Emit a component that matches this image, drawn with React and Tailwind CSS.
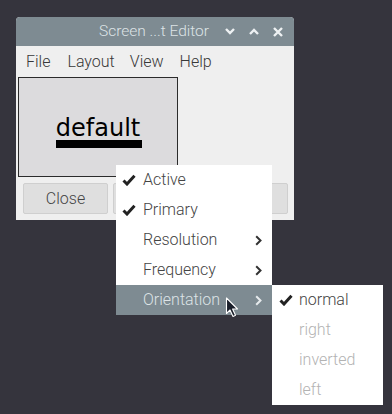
import React from "react";

const Check = ({ className = "" }) => (
  <svg width="14" height="12" viewBox="0 0 14 12" className={className}>
    <path d="M1.5 6.5 L5 10 L12.5 1.8" fill="none" stroke="#222" strokeWidth="3" strokeLinejoin="miter" />
  </svg>
);

const Chev = ({ color = "#333" }) => (
  <svg width="7" height="11" viewBox="0 0 7 11">
    <path d="M1.2 1.2 L5.5 5.5 L1.2 9.8" fill="none" stroke={color} strokeWidth="2" />
  </svg>
);

function MenuItem({ label, checked, sub, active }) {
  return (
    <div className={`flex h-[30px] items-center ${active ? "bg-[#7e8b92] text-[#dde3e6]" : "text-[#444]"}`}>
      <div className="flex w-[27px] justify-start pl-[6px]">{checked && <Check />}</div>
      <span className="flex-1">{label}</span>
      {sub && (
        <div className="mr-[10px]">
          <Chev color={active ? "#e6eaec" : "#333"} />
        </div>
      )}
    </div>
  );
}

export default function App() {
  return (
    <div
      className="relative h-[414px] w-[392px] overflow-hidden bg-[#35343d] font-light"
      style={{ fontFamily: "Roboto, 'Liberation Sans', sans-serif" }}
    >
      {/* Window */}
      <div className="absolute left-[16px] top-[17px] flex h-[203px] w-[278px] flex-col overflow-hidden rounded-t-[4px] bg-[#efefef]">
        <div className="flex h-[29px] items-center bg-[#7e8b92] pl-[83px] text-[15.5px] text-[#dde3e6]">
          <span className="w-[126px] whitespace-nowrap">Screen ...t Editor</span>
          <div className="flex items-center gap-[14px]">
            <svg width="10" height="7" viewBox="0 0 10 7">
              <path d="M1 1 L5 5 L9 1" fill="none" stroke="#eef1f3" strokeWidth="2.4" />
            </svg>
            <svg width="10" height="7" viewBox="0 0 10 7">
              <path d="M1 6 L5 2 L9 6" fill="none" stroke="#eef1f3" strokeWidth="2.4" />
            </svg>
            <svg width="10" height="10" viewBox="0 0 10 10">
              <path d="M1 1 L9 9 M9 1 L1 9" fill="none" stroke="#eef1f3" strokeWidth="2.4" />
            </svg>
          </div>
        </div>
        <div className="flex h-[31px] items-center pl-[10px] text-[16px] text-[#383838]">
          <span>File</span>
          <span className="ml-[17px]">Layout</span>
          <span className="ml-[15px]">View</span>
          <span className="ml-[16px]">Help</span>
        </div>
        <div className="ml-[2px] flex h-[100px] w-[160px] flex-col items-center border border-[#2b2b2b] bg-[#dcdbdd] pt-[38px]">
          <span
            className="text-[24px] leading-[24px] font-normal text-black"
            style={{ fontFamily: "'DejaVu Sans', sans-serif" }}
          >
            default
          </span>
          <div className="ml-[1px] h-[8px] w-[86px] bg-black" />
        </div>
        <div className="ml-[7px] mt-[6px] flex gap-[5px]">
          <div className="flex h-[31px] w-[85px] items-center justify-center rounded-[2px] border border-[#cfcfcf] bg-[#dfdfdf] text-[16px] text-[#444]">
            Close
          </div>
          <div className="h-[31px] w-[85px] rounded-[2px] border border-[#cfcfcf] bg-[#dfdfdf]" />
          <div className="h-[31px] w-[85px] rounded-[2px] border border-[#cfcfcf] bg-[#dfdfdf]" />
        </div>
      </div>

      {/* Context menu */}
      <div className="absolute left-[116px] top-[165px] w-[156px] bg-white text-[16px]">
        <MenuItem label="Active" checked />
        <MenuItem label="Primary" checked />
        <MenuItem label="Resolution" sub />
        <MenuItem label="Frequency" sub />
        <MenuItem label="Orientation" sub active />
      </div>

      {/* Submenu */}
      <div className="absolute left-[272px] top-[285px] w-[111px] bg-white text-[16px]">
        <div className="flex h-[30px] items-center text-[#444]">
          <div className="flex w-[21px] justify-end"><Check /></div>
          <span className="ml-[6px]">normal</span>
        </div>
        <div className="flex h-[30px] items-center pl-[27px] text-[#b3b3b3]">right</div>
        <div className="flex h-[30px] items-center pl-[27px] text-[#b3b3b3]">inverted</div>
        <div className="flex h-[30px] items-center pl-[27px] text-[#b3b3b3]">left</div>
      </div>

      {/* Cursor */}
      <svg className="absolute left-[225px] top-[297px]" width="14" height="21" viewBox="0 0 14 21">
        <path
          d="M1.5 1 L1.5 16.5 L5 13 L8 19.5 L10.5 18.3 L7.6 12 L12.5 12 Z"
          fill="#1a1f2a"
          stroke="#ffffff"
          strokeWidth="1.1"
          strokeLinejoin="round"
        />
      </svg>
    </div>
  );
}
